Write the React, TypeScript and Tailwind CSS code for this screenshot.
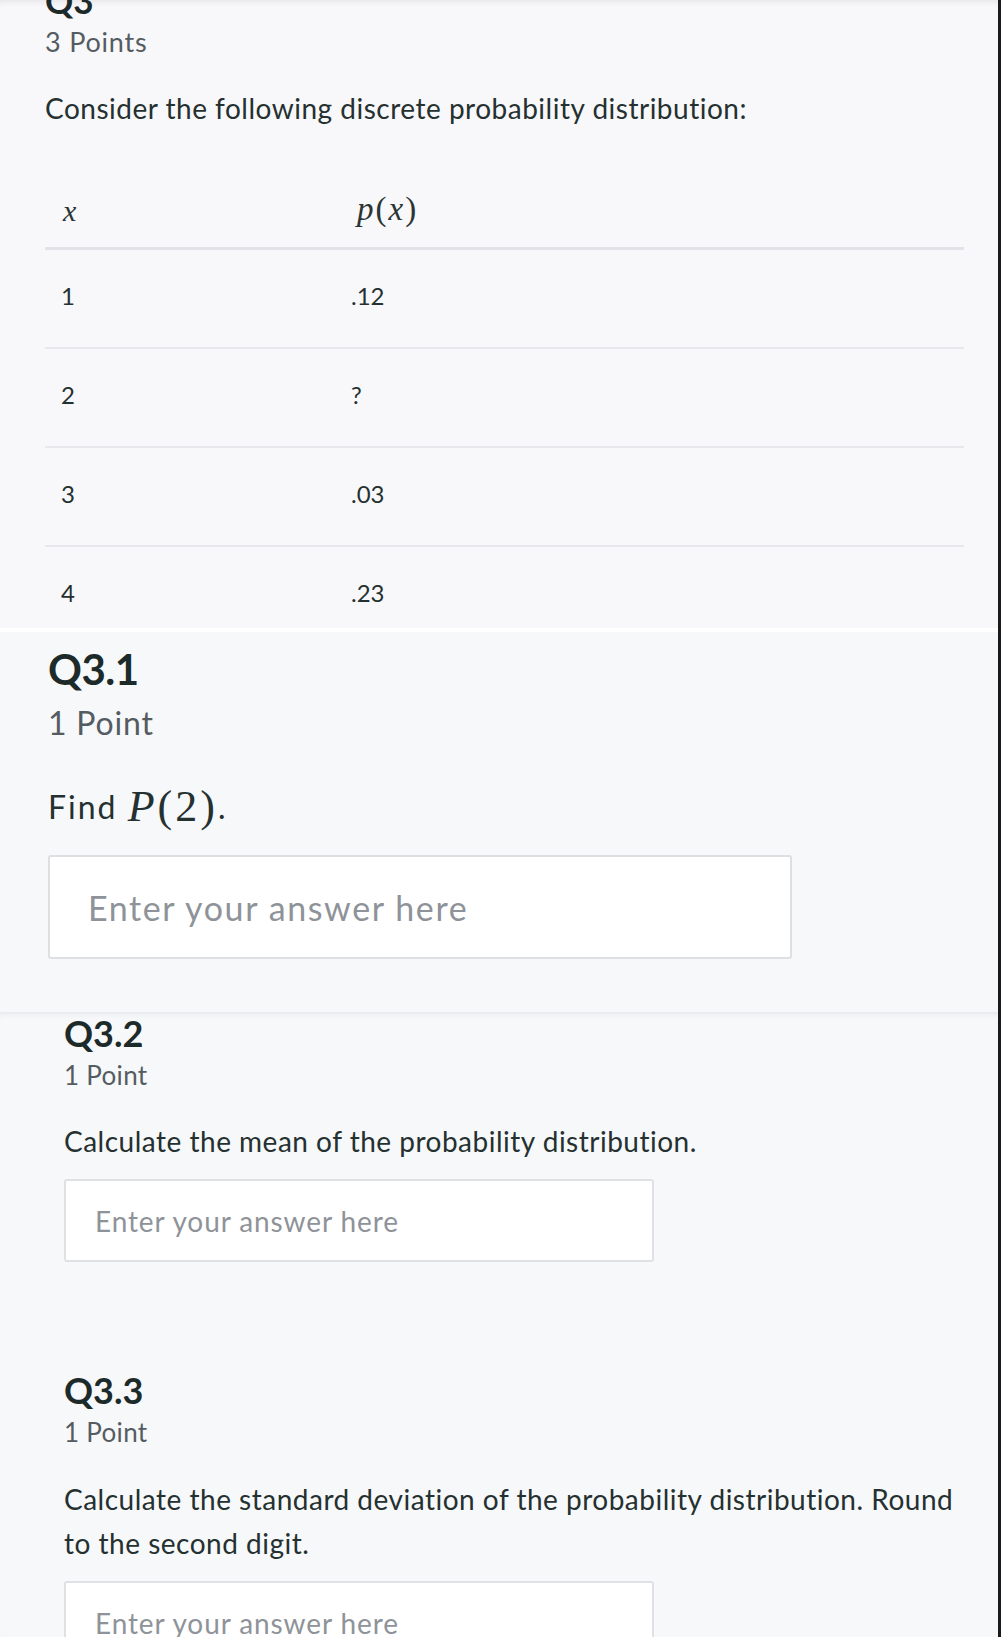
const sans = "font-['Lato','Open_Sans',sans-serif]";
const serif = "font-['Liberation_Serif','DejaVu_Serif',serif]";

const rows = [
  { x: '1', p: '.12' },
  { x: '2', p: '?' },
  { x: '3', p: '.03' },
  { x: '4', p: '.23' },
];

function AnswerBox({ size }: { size: 'lg' | 'sm' }) {
  if (size === 'lg') {
    return (
      <input
        readOnly
        placeholder="Enter your answer here"
        className={`${sans} block h-[104px] w-[744px] rounded-[3px] border-2 border-[#dedfe3] bg-white pl-[38px] text-[34px] tracking-[1.6px] text-[#2a3434] outline-none placeholder:text-[#8e9399]`}
      />
    );
  }
  return (
    <input
      readOnly
      placeholder="Enter your answer here"
      className={`${sans} block h-[83px] w-[590px] rounded-[3px] border-2 border-[#e0e1e5] bg-white pl-[29px] text-[28px] tracking-[0.9px] text-[#2a3434] outline-none placeholder:text-[#8e9399]`}
    />
  );
}

export default function App() {
  return (
    <div className={`${sans} flex h-[1637px] w-[1001px] overflow-hidden bg-[#f6f7f9]`}>
      <div className="flex w-[998px] flex-col">
        {/* Q3 parent question */}
        <section className="h-[628px] shrink-0 overflow-hidden bg-[#f8f8fa] pl-[45px] shadow-[inset_0_6px_6px_-4px_rgba(0,0,0,0.08)]">
          <h2 className="mt-[-20px] h-[40px] text-[35px] font-bold leading-[40px] text-[#1d2a2a]">Q3</h2>
          <div className="mt-[2px] h-[40px] text-[27px] leading-[40px] tracking-[0.8px] text-[#555c61]">3 Points</div>
          <p className="mt-[26px] h-[40px] text-[28px] leading-[40px] tracking-[0.5px] text-[#253030]">
            Consider the following discrete probability distribution:
          </p>

          <div className="mt-[53px] w-[919px]">
            <div className="flex h-[69px] items-center border-b-[3px] border-[#e2e3e8] pb-[8px] text-[#2b3535]">
              <div className={`${serif} w-[290px] pl-[18px] text-[30px] italic`}>x</div>
              <div className={`${serif} pl-[22px] text-[33px] tracking-[2px]`}>
                <span className="italic">p</span>(<span className="italic">x</span>)
              </div>
            </div>
            {rows.map((r) => (
              <div
                key={r.x}
                className="flex h-[99px] items-center border-b-2 border-[#e7e8ec] pb-[5px] text-[24px] text-[#253030]"
              >
                <div className="w-[290px] pl-[16px]">{r.x}</div>
                <div className="pl-[16px]">{r.p}</div>
              </div>
            ))}
          </div>
        </section>

        <div className="h-[4px] shrink-0 bg-white" />

        {/* Q3.1 */}
        <section className="h-[380px] shrink-0 bg-[#f7f8fa] pl-[48px] pt-[15px]">
          <h3 className="h-[44px] text-[42px] font-bold leading-[44px] tracking-[-0.5px] text-[#1d2a2a]">Q3.1</h3>
          <div className="mt-[12px] h-[40px] text-[32px] leading-[40px] tracking-[0.8px] text-[#555c61]">1 Point</div>
          <p className="mt-[42px] flex h-[44px] items-center text-[32px] tracking-[2px] text-[#253030]">
            Find&nbsp;
            <span className={`${serif} text-[44px] tracking-[3px]`}>
              <span className="italic">P</span>(2)
            </span>
            .
          </p>
          <div className="mt-[26px]">
            <AnswerBox size="lg" />
          </div>
        </section>

        {/* Q3.2 and Q3.3 */}
        <section className="flex-1 border-t border-[#e9eaee] bg-[#f7f8fa] pl-[64px] shadow-[inset_0_5px_6px_-4px_rgba(0,0,0,0.07)]">
          <h3 className="h-[40px] text-[36px] font-bold leading-[40px] text-[#1d2a2a]">Q3.2</h3>
          <div className="mt-[4px] h-[36px] text-[26px] leading-[36px] tracking-[0.3px] text-[#555c61]">1 Point</div>
          <p className="mt-[26px] h-[44px] text-[28px] leading-[44px] tracking-[0.5px] text-[#253030]">
            Calculate the mean of the probability distribution.
          </p>
          <div className="mt-[16px]">
            <AnswerBox size="sm" />
          </div>

          <h3 className="mt-[108px] h-[40px] text-[36px] font-bold leading-[40px] text-[#1d2a2a]">Q3.3</h3>
          <div className="mt-[4px] h-[36px] text-[26px] leading-[36px] tracking-[0.3px] text-[#555c61]">1 Point</div>
          <p className="mt-[27px] w-[906px] text-[28px] leading-[44px] tracking-[0.5px] text-[#253030]">
            Calculate the standard deviation of the probability distribution. Round to the second digit.
          </p>
          <div className="mt-[16px]">
            <AnswerBox size="sm" />
          </div>
        </section>
      </div>
      <div className="w-[3px] bg-[#1a1a1a]" />
    </div>
  );
}
